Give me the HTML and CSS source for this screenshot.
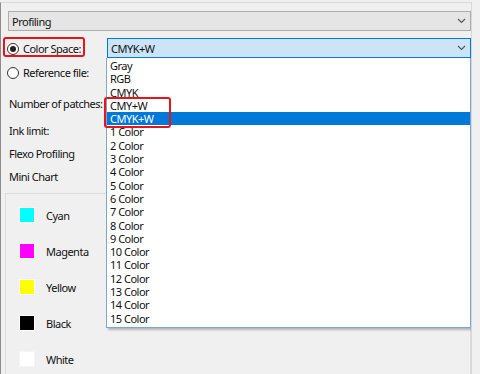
FILE: index.html
```html
<!DOCTYPE html>
<html>
<head>
<meta charset="utf-8">
<link rel="stylesheet" href="styles.css">
</head>
<body>
<div class="frame">
  <div class="combo profiling">
    <span>Profiling</span>
    <svg class="chev" width="9" height="6" viewBox="0 0 9 6"><path d="M1 1 L4.5 4.5 L8 1" fill="none" stroke="#555" stroke-width="1.1"/></svg>
  </div>

  <div class="form">
    <div class="row r1">
      <label class="radio-label highlight-box"><span class="radio checked"></span>Color Space:</label>
      <div class="combo active">
        <span>CMYK+W</span>
        <svg class="chev" width="9" height="6" viewBox="0 0 9 6"><path d="M1 1 L4.5 4.5 L8 1" fill="none" stroke="#555" stroke-width="1.1"/></svg>
      </div>
    </div>
    <div class="row r2"><label class="radio-label"><span class="radio"></span>Reference file:</label></div>
    <div class="row r3"><span class="label">Number of patches:</span></div>
    <div class="row r4"><span class="label">Ink limit:</span></div>
    <div class="row r5"><span class="label">Flexo Profiling</span></div>
    <div class="row r6"><span class="label">Mini Chart</span></div>

    <ul class="dropdown">
      <li>Gray</li>
      <li>RGB</li>
      <li>CMYK</li>
      <li>CMY+W</li>
      <li class="selected">CMYK+W</li>
      <li>1 Color</li>
      <li>2 Color</li>
      <li>3 Color</li>
      <li>4 Color</li>
      <li>5 Color</li>
      <li>6 Color</li>
      <li>7 Color</li>
      <li>8 Color</li>
      <li>9 Color</li>
      <li>10 Color</li>
      <li>11 Color</li>
      <li>12 Color</li>
      <li>13 Color</li>
      <li>14 Color</li>
      <li>15 Color</li>
    </ul>
    <div class="mark-box"></div>
  </div>

  <div class="group">
    <div class="swatch-row"><span class="swatch cyan"></span><span>Cyan</span></div>
    <div class="swatch-row"><span class="swatch magenta"></span><span>Magenta</span></div>
    <div class="swatch-row"><span class="swatch yellow"></span><span>Yellow</span></div>
    <div class="swatch-row"><span class="swatch black"></span><span>Black</span></div>
    <div class="swatch-row"><span class="swatch white"></span><span>White</span></div>
  </div>
</div>
</body>
</html>
```

FILE: styles.css
```css
html, body {
  margin: 0;
  padding: 0;
  background: #f0f0f0;
  width: 480px;
  height: 374px;
  overflow: hidden;
}
body {
  font-family: "Noto Sans", "Open Sans", sans-serif;
  font-size: 11px;
  letter-spacing: -0.5px;
  color: #111;
}
.frame {
  margin-top: 2px;
  width: 472px;
  height: 372px;
  overflow: hidden;
  border-top: 1px solid #d8d8d8;
  border-left: 1px solid #8c8c8c;
  border-right: 1px solid #d8d8d8;
  box-sizing: border-box;
  padding-top: 8px;
}
.combo {
  height: 20px;
  box-sizing: border-box;
  border: 1px solid #adadad;
  background: #e5e5e5;
  display: flex;
  align-items: center;
  justify-content: space-between;
  padding: 0 4px 0 3px;
}
.profiling {
  margin-left: 7px;
  width: 463px;
}
.chev { display: block; }
.form {
  position: relative;
  margin-top: 7px;
  height: 155px;
}
.row {
  display: flex;
  align-items: center;
  height: 20px;
  width: max-content;
  white-space: nowrap;
}
.r1 { position: relative; }
.r2 { margin-top: 4px; }
.r3 { margin-top: 11px; }
.r4 { margin-top: 7px; }
.r5 { margin-top: 3px; }
.r6 { margin-top: 3px; }
.label { padding-left: 8px; }
.radio-label {
  display: flex;
  align-items: center;
  width: 106px;
  padding-left: 6px;
  box-sizing: border-box;
  padding-top: 1px;
}
.r2 .radio-label { width: auto; }
.highlight-box::before {
  content: "";
  position: absolute;
  left: 2px;
  top: -1px;
  width: 82px;
  height: 20px;
  border: 2px solid #e8141c;
  border-radius: 3px;
  box-sizing: border-box;
}
.radio {
  width: 12px;
  height: 12px;
  border: 1px solid #333;
  border-radius: 50%;
  box-sizing: border-box;
  background: #fff;
  margin-right: 4px;
  position: relative;
  flex: none;
}
.radio.checked::after {
  content: "";
  position: absolute;
  left: 2px;
  top: 2px;
  width: 6px;
  height: 6px;
  border-radius: 50%;
  background: #222;
}
.combo.active {
  width: 364px;
  background: #cce4f7;
  border-color: #0078d7;
  padding-left: 3px;
}
.dropdown {
  position: absolute;
  left: 105px;
  top: 20px;
  width: 365px;
  margin: 0;
  padding: 1px 0 2px 0;
  list-style: none;
  background: #fff;
  border: 1px solid #7aa7d6;
  border-top: none;
  box-sizing: border-box;
  box-shadow: 2px 2px 2px rgba(0,0,0,0.25);
  z-index: 2;
}
.dropdown li {
  height: 13.3px;
  line-height: 13.3px;
  padding-left: 3px;
  white-space: nowrap;
}
.dropdown li.selected {
  background: #0078d7;
  color: #fff;
}
.mark-box {
  position: absolute;
  left: 103px;
  top: 59px;
  width: 67px;
  height: 31px;
  border: 2px solid #e8141c;
  border-radius: 3px;
  box-sizing: border-box;
  z-index: 3;
}
.group {
  margin-left: 4px;
  border: 1px solid #dcdcdc;
  border-bottom: none;
  height: 200px;
  padding-top: 13px;
  box-sizing: border-box;
}
.swatch-row {
  display: flex;
  align-items: center;
  width: max-content;
  height: 16px;
  margin-bottom: 20px;
  padding-left: 13px;
}
.swatch {
  width: 16px;
  height: 16px;
  box-sizing: border-box;
  border: 1px solid #fff;
  margin-right: 11px;
  flex: none;
}
.cyan { background: #00ffff; }
.magenta { background: #ff00ff; }
.yellow { background: #ffff00; }
.black { background: #000; }
.white { background: #fff; border-color: #f4f4f4; }
```
